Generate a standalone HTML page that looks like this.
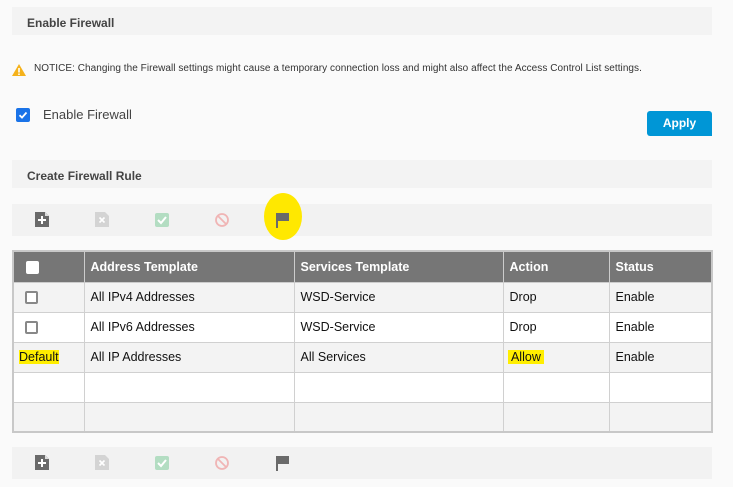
<!DOCTYPE html>
<html><head><meta charset="utf-8"><style>
*{margin:0;padding:0;box-sizing:border-box}
body{width:733px;height:487px;background:#fafafa;font-family:"Liberation Sans",sans-serif;color:#222;position:relative;overflow:hidden}
.abs{position:absolute}
.bar{position:absolute;left:12px;width:700px;height:28px;background:#f3f3f3;font-weight:bold;font-size:12px;color:#444;padding:9px 0 0 15px}
.tb{position:absolute;left:12px;width:700px;height:32px;background:#f2f2f2}
table{position:absolute;left:12px;top:250px;border-collapse:collapse;border:2px solid #c8c8c8;font-size:12.5px;color:#111}
td,th{border:1px solid #d0d0d0;padding:0 0 0 6px;text-align:left;height:30px}
th{background:#767676;color:#fff;font-weight:bold;border-color:#ccc;height:31px}
tr:nth-child(even) td{background:#f3f3f3}
tr:nth-child(odd) td{background:#fff}
.cb{display:inline-block;width:13px;height:13px;border:2px solid #888;border-radius:2px;background:#fff;vertical-align:middle;margin-left:5px}
.hl{background:#ffee00}
</style></head><body>
<div class="bar" style="top:7px">Enable Firewall</div>
<svg class="abs" style="left:11px;top:63px" width="16" height="14"><path d="M8 1 L15 13 L1 13Z" fill="#f5b21b"/><rect x="7.2" y="5" width="1.6" height="4.5" fill="#fff"/><rect x="7.2" y="10.5" width="1.6" height="1.5" fill="#fff"/></svg>
<div class="abs" style="left:34px;top:63px;font-size:10px;color:#333;letter-spacing:0.05px">NOTICE: Changing the Firewall settings might cause a temporary connection loss and might also affect the Access Control List settings.</div>
<div class="abs" style="left:16px;top:108px;width:14px;height:14px;background:#1a73e8;border-radius:2px"><svg width="14" height="14"><path d="M3.5 7.2 L6 9.6 L10.5 4.5" stroke="#fff" stroke-width="1.8" fill="none"/></svg></div>
<div class="abs" style="left:43px;top:107px;font-size:13px;color:#444">Enable Firewall</div>
<div class="abs" style="left:647px;top:111px;width:65px;height:25px;background:#0096d6;border-radius:3px 3px 0 3px;color:#fff;font-weight:bold;font-size:12px;text-align:center;line-height:25px">Apply</div>
<div class="bar" style="top:160px">Create Firewall Rule</div>
<div class="tb" style="top:204px"></div>
<div class="abs" style="left:264px;top:193px;width:38px;height:47px;background:#ffe800;border-radius:50%"></div>
<div class="tb" style="top:447px"></div>
<svg class="abs" style="left:0;top:204px" width="320" height="32">
<g id="ic"><path d="M35 8 H45 L49 12 V23 H35Z" fill="#6a6a6a"/><path d="M45 8 V12 H49" fill="#ddd"/><path d="M42 12 V20 M38 16 H46" stroke="#fff" stroke-width="2"/>
<path d="M95 8 H105 L109 12 V23 H95Z" fill="#d4d4d4"/><path d="M99.5 13.5 L104.5 18.5 M104.5 13.5 L99.5 18.5" stroke="#fff" stroke-width="1.6"/>
<rect x="155" y="9" width="14" height="14" rx="2" fill="#b3ddc2"/><path d="M158 16 L161 19 L166 13" stroke="#fff" stroke-width="2" fill="none"/>
<circle cx="222" cy="16" r="6" stroke="#f0b5b5" stroke-width="1.8" fill="none"/><path d="M218 12 L226 20" stroke="#f0b5b5" stroke-width="1.8"/>
<rect x="276" y="9" width="2" height="15" fill="#6a6a6a"/><rect x="278" y="9" width="11" height="8" fill="#6a6a6a"/></g>
</svg>
<svg class="abs" style="left:0;top:447px" width="320" height="32"><use href="#ic"/></svg>
<table>
<tr><th style="width:71px"><span class="cb" style="border-color:#fff;margin-left:6px"></span></th><th style="width:210px">Address Template</th><th style="width:209px">Services Template</th><th style="width:106px">Action</th><th style="width:103px">Status</th></tr>
<tr><td><span class="cb"></span></td><td>All IPv4 Addresses</td><td>WSD-Service</td><td>Drop</td><td>Enable</td></tr>
<tr><td><span class="cb"></span></td><td>All IPv6 Addresses</td><td>WSD-Service</td><td>Drop</td><td>Enable</td></tr>
<tr><td style="padding-left:5px"><span class="hl">Default</span></td><td>All IP Addresses</td><td>All Services</td><td style="padding-left:4px"><span class="hl">&nbsp;Allow&nbsp;</span></td><td>Enable</td></tr>
<tr><td></td><td></td><td></td><td></td><td></td></tr>
<tr><td></td><td></td><td></td><td></td><td></td></tr>
</table>
</body></html>
